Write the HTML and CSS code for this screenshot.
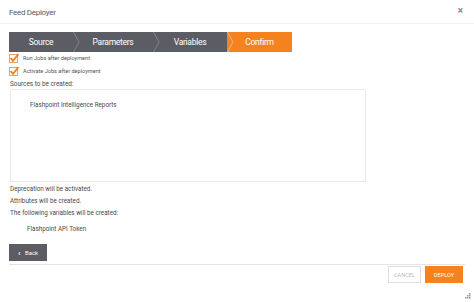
FILE: index.html
```html
<!DOCTYPE html>
<html>
<head>
<meta charset="utf-8">
<link rel="stylesheet" href="styles.css">
</head>
<body>
<div class="dialog">
  <header class="header">
    <span class="title">Feed Deployer</span>
    <span class="close">×</span>
  </header>
  <div class="content">
    <div class="wizard">
      <div class="step s1">Source</div>
      <div class="step s2"><svg class="chev" width="7" height="20" viewBox="0 0 7 20"><polyline points="0.5,0 6,10 0.5,20" fill="none" stroke="#8a8a90" stroke-width="0.8"/></svg>Parameters</div>
      <div class="step s3"><svg class="chev" width="7" height="20" viewBox="0 0 7 20"><polyline points="0.5,0 6,10 0.5,20" fill="none" stroke="#8a8a90" stroke-width="0.8"/></svg>Variables</div>
      <div class="step s4 active"><svg class="chev" width="7" height="20" viewBox="0 0 7 20"><polyline points="0.5,0 6,10 0.5,20" fill="none" stroke="#c9c9cc" stroke-width="0.8"/></svg>Confirm</div>
    </div>
    <div class="checks">
      <label class="check"><svg width="10" height="10" viewBox="0 0 10 10"><rect x="0.5" y="1.5" width="8" height="8" fill="#fff" stroke="#f0a060" stroke-width="1"/><polyline points="1.6,5 4,7.8 9.5,1" fill="none" stroke="#f07d1e" stroke-width="1.8"/></svg><span>Run Jobs after deployment</span></label>
      <label class="check"><svg width="10" height="10" viewBox="0 0 10 10"><rect x="0.5" y="1.5" width="8" height="8" fill="#fff" stroke="#f0a060" stroke-width="1"/><polyline points="1.6,5 4,7.8 9.5,1" fill="none" stroke="#f07d1e" stroke-width="1.8"/></svg><span>Activate Jobs after deployment</span></label>
    </div>
    <div class="section-label">Sources to be created:</div>
    <div class="sources">
      <div class="source-item">Flashpoint Intelligence Reports</div>
    </div>
    <div class="lines">
      <div class="line">Deprecation will be activated.</div>
      <div class="line">Attributes will be created.</div>
      <div class="line">The following variables will be created:</div>
    </div>
    <div class="var-item">Flashpoint API Token</div>
    <button class="btn-back"><span class="lt">&#8249;</span> Back</button>
    <div class="footer">
      <button class="btn-cancel">CANCEL</button>
      <button class="btn-deploy">DEPLOY</button>
    </div>
  </div>
  <div class="grip"><svg width="6" height="6" viewBox="0 0 6 6"><rect x="4" y="0" width="1.5" height="1.5" fill="#999"/><rect x="2" y="2" width="1.5" height="1.5" fill="#999"/><rect x="4" y="2" width="1.5" height="1.5" fill="#999"/><rect x="0" y="4" width="1.5" height="1.5" fill="#999"/><rect x="2" y="4" width="1.5" height="1.5" fill="#999"/><rect x="4" y="4" width="1.5" height="1.5" fill="#999"/></svg></div>
</div>
</body>
</html>
```
FILE: styles.css
```css
* { box-sizing: border-box; }
html, body { margin: 0; padding: 0; background: #fff; }
body { font-family: Roboto, "Liberation Sans", sans-serif; color: #4a4a4a; width: 474px; height: 302px; overflow: hidden; }
.dialog { position: relative; width: 474px; height: 302px; }
.header { height: 24px; display: flex; align-items: center; justify-content: space-between; padding: 0 11px 0 9px; border-bottom: 1px solid #f0f0f0; }
.title { font-size: 8px; letter-spacing: -0.3px; color: #5a5a5a; padding-top: 1px; }
.close { font-size: 10px; color: #888; font-weight: bold; margin-top: -3px; }
.content { padding: 8px 9px 0 9px; }
.wizard { display: flex; width: 283px; height: 20px; background: #5c5c64; }
.step { position: relative; height: 20px; display: flex; align-items: center; justify-content: center; color: #fff; font-size: 8.5px; letter-spacing: -0.3px; }
.chev { position: absolute; left: 0; top: 0; }
.s1 { width: 64px; }
.s2 { width: 80px; }
.s3 { width: 74px; }
.s4 { width: 65px; }
.active { background: #f5821f; }
.checks { margin-top: -1px; }
.check { display: flex; align-items: center; gap: 4px; height: 13px; font-size: 5.6px; color: #555; }
.check svg { flex: none; }
.section-label { font-size: 6.4px; color: #4a4a4a; margin-top: 3px; margin-left: 1px; height: 9px; line-height: 9px; }
.sources { margin: 0 0 0 1px; width: 356px; height: 93px; border: 1px solid #e9e9e9; padding: 11px 0 0 19px; }
.source-item { font-size: 6.3px; color: #4a4a4a; }
.line { font-size: 6.3px; color: #4a4a4a; margin-left: 1px; height: 12px; line-height: 12px; }
.lines { margin-top: 1px; }
.var-item { font-size: 6.3px; color: #4a4a4a; margin: 4px 0 0 18px; height: 12px; line-height: 12px; }
.btn-back { display: block; margin-top: 9px; width: 38px; height: 17px; background: #5c5c64; border: none; color: #fff; font-family: inherit; font-size: 6px; padding: 0; }
.lt { font-weight: bold; font-size: 8px; margin-right: 3px; }
.footer { margin-top: 3px; border-top: 1px solid #e4e4e4; width: 456px; display: flex; justify-content: flex-end; gap: 4px; padding-top: 1px; padding-right: 2px; }
.btn-cancel { width: 33px; height: 17px; background: #fff; border: 1px solid #ddd; color: #bbb; font-family: inherit; font-size: 5.6px; padding: 0; }
.btn-deploy { width: 38px; height: 17px; background: #f5821f; border: none; color: #fff; font-family: inherit; font-size: 5.6px; padding: 0; }
.grip { position: absolute; right: 3px; bottom: 3px; width: 6px; height: 6px; }
.grip svg { display: block; }
```
